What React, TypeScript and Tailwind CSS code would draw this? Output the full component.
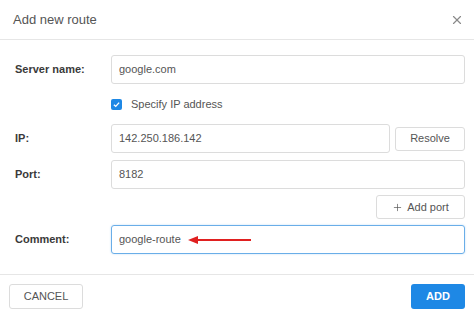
import { X, Plus } from 'lucide-react';

const font = { fontFamily: "'Liberation Sans', Arial, sans-serif" };

function Label({ children }: { children: string }) {
  return <span className="w-[111px] shrink-0 pl-[15px] text-[11px] font-bold text-[#3a3a3a]">{children}</span>;
}

export default function App() {
  return (
    <div className="h-[318px] w-[474px] bg-white" style={font}>
      <header className="flex h-[40px] items-center justify-between border-b border-[#e6e6e6] pl-[13px] pr-[10px]">
        <h1 className="text-[13px] text-[#555]">Add new route</h1>
        <X className="h-[14px] w-[14px] text-[#8a8a8a]" strokeWidth={2} aria-hidden />
      </header>

      <div className="pr-[9px] pt-[15px]">
        <div className="flex items-center">
          <Label>Server name:</Label>
          <div className="flex h-[29px] flex-1 items-center rounded-[3px] border border-[#dcdcdc] px-[7px] text-[11px] text-[#555]">
            google.com
          </div>
        </div>

        <div className="mt-[14px] flex h-[12px] items-center pl-[111px]">
          <span className="flex h-[11px] w-[11px] items-center justify-center rounded-[2px] bg-[#1e88e5]">
            <svg viewBox="0 0 12 12" className="h-[9px] w-[9px]" aria-hidden>
              <path d="M2.5 6.2 L5 8.5 L9.5 3.5" fill="none" stroke="white" strokeWidth="1.8" />
            </svg>
          </span>
          <span className="ml-[9px] text-[11px] text-[#555]">Specify IP address</span>
        </div>

        <div className="mt-[14px] flex items-center">
          <Label>IP:</Label>
          <div className="flex h-[29px] flex-1 items-center rounded-[3px] border border-[#dcdcdc] px-[7px] text-[11px] text-[#555]">
            142.250.186.142
          </div>
          <button
            type="button"
            className="ml-[5px] h-[24px] w-[70px] rounded-[3px] border border-[#dcdcdc] text-[11px] text-[#555]"
          >
            Resolve
          </button>
        </div>

        <div className="mt-[7px] flex items-center">
          <Label>Port:</Label>
          <div className="flex h-[29px] flex-1 items-center rounded-[3px] border border-[#dcdcdc] px-[7px] text-[11px] text-[#555]">
            8182
          </div>
        </div>

        <div className="mt-[6px] flex justify-end">
          <button
            type="button"
            className="flex h-[24px] w-[89px] items-center justify-center gap-[4px] rounded-[3px] border border-[#dcdcdc] text-[11px] text-[#555]"
          >
            <Plus className="h-[11px] w-[11px]" strokeWidth={1.5} aria-hidden />
            Add port
          </button>
        </div>

        <div className="mt-[6px] flex items-center">
          <Label>Comment:</Label>
          <div className="relative flex h-[29px] flex-1 items-center rounded-[3px] border border-[#6aaee8] px-[7px] text-[11px] text-[#555] shadow-[0_0_2px_rgba(30,136,229,0.3)]">
            google-route
            <svg
              viewBox="0 0 64 10"
              className="absolute left-[76px] top-[9px] h-[10px] w-[64px]"
              aria-hidden
            >
              <path d="M0 5 L10 1 L10 9 Z" fill="#e02020" />
              <path d="M9 5 H63" stroke="#e02020" strokeWidth="2" />
            </svg>
          </div>
        </div>
      </div>

      <footer className="mt-[20px] flex items-center justify-between border-t border-[#e6e6e6] px-[9px] pt-[9px]">
        <button
          type="button"
          className="h-[25px] w-[74px] rounded-[3px] border border-[#dcdcdc] text-[11px] text-[#555]"
        >
          CANCEL
        </button>
        <button
          type="button"
          className="h-[25px] w-[54px] rounded-[3px] bg-[#1e88e5] text-[11px] font-bold text-white"
        >
          ADD
        </button>
      </footer>
    </div>
  );
}
